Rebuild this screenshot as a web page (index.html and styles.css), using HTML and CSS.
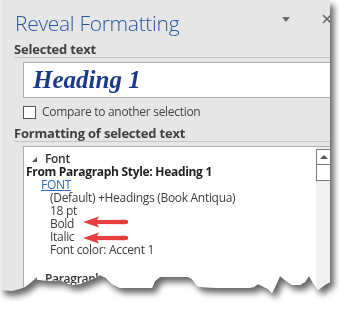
FILE: index.html
```html
<!DOCTYPE html>
<html>
<head>
<meta charset="utf-8">
<link rel="stylesheet" href="styles.css">
</head>
<body>
<div class="frame">
  <div class="panel">
    <div class="titlebar">
      <h1 class="title">Reveal Formatting</h1>
      <span class="dropdown"></span>
      <svg class="close" width="10" height="10" viewBox="0 0 10 10"><path d="M1 1L9 9M9 1L1 9" stroke="#6a6a6a" stroke-width="1.6" fill="none"/></svg>
    </div>
    <div class="section-label">Selected text</div>
    <div class="sample">Heading 1</div>
    <label class="compare"><span class="checkbox"></span>Compare to another selection</label>
    <div class="section-label second">Formatting of selected text</div>
    <div class="listbox">
      <div class="list-content">
        <div class="row group"><span class="tri"></span>Font</div>
        <div class="row strong">From Paragraph Style: Heading 1</div>
        <div class="row link"><span>FONT</span></div>
        <div class="row detail">(Default) +Headings (Book Antiqua)</div>
        <div class="row detail">18 pt</div>
        <div class="row detail">Bold</div>
        <div class="row detail">Italic</div>
        <div class="row detail">Font color: Accent 1</div>
        <div class="row group para"><span class="tri"></span>Paragraph</div>
      </div>
      <div class="scrollbar">
        <div class="sb-up"><span class="sb-arrow"></span></div>
        <div class="sb-thumb"></div>
      </div>
    </div>
  </div>
  <svg class="arrows" width="60" height="40" viewBox="0 0 60 40">
    <g fill="#e5403e">
      <path d="M0 7 L16 1.5 L14 5 L42 4.8 Q45.2 4.8 45.2 7 Q45.2 9.2 42 9.2 L14 9 L16 12.5 Z"/>
      <path d="M0 23 L16 17.5 L14 21 L42 20.8 Q45.2 20.8 45.2 23 Q45.2 25.2 42 25.2 L14 25 L16 28.5 Z"/>
    </g>
  </svg>
</div>
</body>
</html>
```
FILE: styles.css
```css
html, body {
  margin: 0;
  padding: 0;
  background: #ffffff;
}
body {
  width: 345px;
  height: 317px;
  overflow: hidden;
  font-family: "Open Sans", "Noto Sans", sans-serif;
}
.frame {
  position: relative;
  width: 330px;
  filter: drop-shadow(4px 5px 3px rgba(0, 0, 0, 0.6));
}
.panel {
  width: 330px;
  height: 300px;
  background: #e6e6e6;
  overflow: hidden;
  box-sizing: border-box;
  border-left: 2px solid #eeeeee;
  clip-path: polygon(0 0, 330px 0, 330px 282px, 326px 284px, 322px 287px, 318px 290px, 313px 283px, 309px 276px, 305px 282px, 300px 285px, 292px 285px, 286px 281px, 280px 276px, 276px 285px, 272px 293px, 268px 289px, 262px 286px, 258px 284px, 254px 287px, 248px 288px, 220px 288px, 200px 287px, 197px 286px, 192px 279px, 188px 277px, 160px 277px, 155px 281px, 152px 288px, 120px 288px, 112px 284px, 106px 278px, 100px 275px, 95px 278px, 90px 280px, 80px 284px, 72px 285px, 66px 283px, 60px 280px, 50px 281px, 40px 280px, 35px 279px, 30px 283px, 25px 287px, 20px 289px, 12px 291px, 0 290px);
}
.titlebar {
  display: flex;
  align-items: center;
  height: 42px;
  padding-left: 13px;
}
.title {
  margin: 0;
  font-size: 21px;
  font-weight: 300;
  color: #2b579a;
  letter-spacing: -0.3px;
  flex: 1;
  line-height: 26px;
  padding-top: 3px;
}
.dropdown {
  width: 0;
  height: 0;
  border-left: 4.5px solid transparent;
  border-right: 4.5px solid transparent;
  border-top: 5px solid #6a6a6a;
  margin-right: 32px;
  margin-top: -4px;
}
.close {
  margin-right: -2px;
  margin-top: -4px;
  flex: none;
}
.section-label {
  margin-left: 12px;
  font-size: 13px;
  font-weight: 700;
  color: #404040;
  line-height: 15px;
  border-bottom: 1px solid #c6c6c6;
  letter-spacing: -0.2px;
}
.section-label.second {
  margin-top: 7px;
}
.sample {
  margin: 4px 0 0 21px;
  width: 330px;
  height: 34px;
  background: #ffffff;
  border: 1px solid #acacac;
  font-family: "Liberation Serif", "DejaVu Serif", serif;
  font-weight: 700;
  font-style: italic;
  font-size: 25px;
  color: #1c3a8c;
  line-height: 34px;
  padding-left: 9px;
}
.compare {
  display: flex;
  align-items: center;
  margin: 7px 0 0 21px;
  font-size: 12px;
  color: #444444;
  line-height: 14px;
  letter-spacing: -0.3px;
}
.checkbox {
  width: 11px;
  height: 11px;
  border: 1px solid #555555;
  background: #ffffff;
  margin-right: 6px;
}
.listbox {
  display: grid;
  grid-template-columns: 292px 40px;
  margin: 4px 0 0 21px;
  width: 340px;
  height: 200px;
  background: #ffffff;
  border: 1px solid #acacac;
  box-sizing: border-box;
}
.list-content {
  padding-top: 5px;
  font-size: 12px;
  color: #3c3c3c;
  letter-spacing: -0.3px;
}
.row {
  line-height: 13px;
  height: 13px;
  white-space: nowrap;
}
.row.strong {
  font-weight: 700;
  color: #1e1e1e;
  padding-left: 2px;
}
.row.group {
  padding-left: 8px;
  font-weight: 600;
  color: #333333;
  display: flex;
  align-items: center;
}
.row.para {
  margin-top: 16px;
}
.tri {
  width: 0;
  height: 0;
  border-left: 5px solid transparent;
  border-bottom: 5px solid #555555;
  margin-right: 8px;
  margin-top: 1px;
}
.row.link {
  padding-left: 17px;
}
.row.link span {
  color: #2e6ab8;
  text-decoration: underline;
}
.row.detail {
  padding-left: 26px;
}
.scrollbar {
  background: #f0f0f0;
  padding-top: 2px;
}
.sb-up {
  height: 14px;
  border: 1px solid #7a7a7a;
  border-right: none;
  background: #ffffff;
  display: flex;
  justify-content: flex-start;
  align-items: center;
  padding-left: 3px;
}
.sb-arrow {
  width: 0;
  height: 0;
  border-left: 4px solid transparent;
  border-right: 4px solid transparent;
  border-bottom: 4px solid #555555;
}
.sb-thumb {
  height: 15px;
  border: 1px solid #7a7a7a;
  border-right: none;
  border-top: none;
  background: #ffffff;
}
.arrows {
  position: absolute;
  left: 83px;
  top: 215px;
}
```
